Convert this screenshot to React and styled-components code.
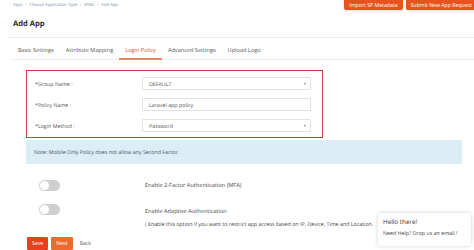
import styled, { createGlobalStyle } from "styled-components";

const GlobalStyle = createGlobalStyle`
  body {
    margin: 0;
    background: #fff;
    font-family: "Open Sans", "Liberation Sans", sans-serif;
    text-rendering: geometricPrecision;
  }
`;

const Page = styled.div`
  position: relative;
  width: 474px;
  height: 250px;
  overflow: hidden;
  color: #333;
`;

const TopBar = styled.div`
  display: flex;
  justify-content: space-between;
  align-items: flex-start;
  height: 12px;
  padding-left: 13px;
`;

const Breadcrumb = styled.div`
  font-size: 4.2px;
  color: #7990ab;
  padding-top: 3px;

  span {
    color: #b9c3cf;
    margin: 0 2.5px;
  }
`;

const Actions = styled.div`
  display: flex;
  gap: 3px;
  margin-right: -3px;
`;

const ActionButton = styled.button`
  height: 13px;
  margin-top: -3px;
  padding: 3px 5px 0;
  border: none;
  border-radius: 2px;
  background: #e8531d;
  color: #fff;
  font-family: inherit;
  font-size: 5.2px;
  box-shadow: 0 1px 2px rgba(0, 0, 0, 0.15);
`;

const Title = styled.h1`
  margin: 0;
  padding: 0 13px;
  height: 25px;
  line-height: 25px;
  font-size: 7.6px;
  font-weight: 700;
  color: #2b2b2b;
`;

const Divider = styled.div`
  margin-left: 8px;
  border-bottom: 1px solid #ececec;
`;

const Tabs = styled.div`
  display: flex;
  margin: 0 0 0 12px;
  height: 21px;
  border-bottom: 1px solid #ececec;
`;

const Tab = styled.div`
  display: flex;
  align-items: center;
  padding: 3px 6px 0;
  font-size: 5.6px;
  color: ${(p) => (p.$active ? "#d0532a" : "#555")};
  border-bottom: 2px solid ${(p) => (p.$active ? "#e0876a" : "transparent")};
  margin-bottom: -1px;
`;

const Card = styled.div`
  margin: 10px 0 0 26px;
  width: 297px;
  box-sizing: border-box;
  border: 1.5px solid #d7373d;
  padding: 6px 11px 5px 8px;
  display: flex;
  flex-direction: column;
  gap: 8px;
`;

const FieldRow = styled.div`
  display: flex;
  align-items: center;
  height: 13px;
`;

const Label = styled.div`
  width: 107px;
  font-size: 5.3px;
  color: #555;
`;

const Field = styled.div`
  flex: 1;
  height: 13px;
  box-sizing: border-box;
  border: 1px solid #e1e1e1;
  border-radius: 1px;
  display: flex;
  align-items: center;
  justify-content: space-between;
  padding: 0 4px 0 6px;
  font-size: 5.3px;
  color: #555;
`;

const Caret = styled.span`
  width: 0;
  height: 0;
  border-left: 1.5px solid transparent;
  border-right: 1.5px solid transparent;
  border-top: 2px solid #888;
`;

const Note = styled.div`
  margin: 2px 0 0 26px;
  width: 436px;
  height: 24px;
  background: #dcedf5;
  display: flex;
  align-items: center;
  padding-left: 8px;
  box-sizing: border-box;
  font-size: 5.3px;
  color: #4a5660;
`;

const ToggleRow = styled.div`
  display: flex;
  align-items: flex-start;
  margin-left: 39px;
  margin-top: ${(p) => p.$mt}px;
`;

const Toggle = styled.div`
  width: 21px;
  height: 11px;
  border-radius: 6px;
  background: #cfcfcf;
  padding: 1px;
  box-sizing: border-box;
  flex-shrink: 0;

  &::after {
    content: "";
    display: block;
    width: 9px;
    height: 9px;
    border-radius: 50%;
    background: #fff;
  }
`;

const ToggleBody = styled.div`
  margin-left: 85px;
  display: flex;
  flex-direction: column;
  gap: 2px;
  padding-top: ${(p) => p.$offset || 0}px;
`;

const ToggleText = styled.div`
  font-size: ${(p) => (p.$small ? 5.3 : 5.6)}px;
  color: #444;
  line-height: 11px;
  white-space: nowrap;
`;

const Footer = styled.div`
  display: flex;
  align-items: center;
  gap: 3px;
  margin: 7px 0 0 27px;
`;

const FooterButton = styled.button`
  height: 13px;
  padding: 0 5px;
  border: none;
  border-radius: 1px;
  background: ${(p) => (p.$light ? "#ec6a2e" : "#e8401c")};
  color: #fff;
  font-family: inherit;
  font-size: 5.2px;
`;

const BackLink = styled.span`
  margin-left: 4px;
  font-size: 5.2px;
  color: #555;
`;

const ChatBubble = styled.div`
  position: absolute;
  left: 378px;
  top: 213px;
  width: 93px;
  height: 33px;
  box-sizing: border-box;
  background: #fff;
  border-radius: 3px;
  box-shadow: 0 0 4px rgba(0, 0, 0, 0.18);
  padding: 4px 0 0 5px;
`;

const ChatTitle = styled.div`
  font-size: 6.3px;
  color: #333;
`;

const ChatText = styled.div`
  margin-top: 3px;
  font-size: 5.3px;
  color: #444;
`;

export default function App() {
  return (
    <Page>
      <GlobalStyle />
      <TopBar>
        <Breadcrumb>
          Apps<span>/</span>Choose Application Type<span>/</span>SAML<span>/</span>Add App
        </Breadcrumb>
        <Actions>
          <ActionButton>Import SP Metadata</ActionButton>
          <ActionButton>Submit New App Request</ActionButton>
        </Actions>
      </TopBar>
      <Title>Add App</Title>
      <Divider />
      <Tabs>
        <Tab>Basic Settings</Tab>
        <Tab>Attribute Mapping</Tab>
        <Tab $active>Login Policy</Tab>
        <Tab>Advanced Settings</Tab>
        <Tab>Upload Logo</Tab>
      </Tabs>
      <Card>
        <FieldRow>
          <Label>*Group Name :</Label>
          <Field>
            DEFAULT
            <Caret />
          </Field>
        </FieldRow>
        <FieldRow>
          <Label>*Policy Name :</Label>
          <Field>Laravel app policy</Field>
        </FieldRow>
        <FieldRow>
          <Label>*Login Method :</Label>
          <Field>
            Password
            <Caret />
          </Field>
        </FieldRow>
      </Card>
      <Note>Note: Mobile Only Policy does not allow any Second Factor.</Note>
      <ToggleRow $mt={16}>
        <Toggle />
        <ToggleBody>
          <ToggleText>Enable 2-Factor Authentication (MFA)</ToggleText>
        </ToggleBody>
      </ToggleRow>
      <ToggleRow $mt={13}>
        <Toggle />
        <ToggleBody $offset={1.5}>
          <ToggleText>Enable Adaptive Authentication</ToggleText>
          <ToggleText $small>
            ( Enable this option if you want to restrict app access based on IP, Device, Time and Location.
          </ToggleText>
        </ToggleBody>
      </ToggleRow>
      <Footer>
        <FooterButton>Save</FooterButton>
        <FooterButton $light>Next</FooterButton>
        <BackLink>Back</BackLink>
      </Footer>
      <ChatBubble>
        <ChatTitle>Hello there!</ChatTitle>
        <ChatText>Need Help? Drop us an email !</ChatText>
      </ChatBubble>
    </Page>
  );
}
